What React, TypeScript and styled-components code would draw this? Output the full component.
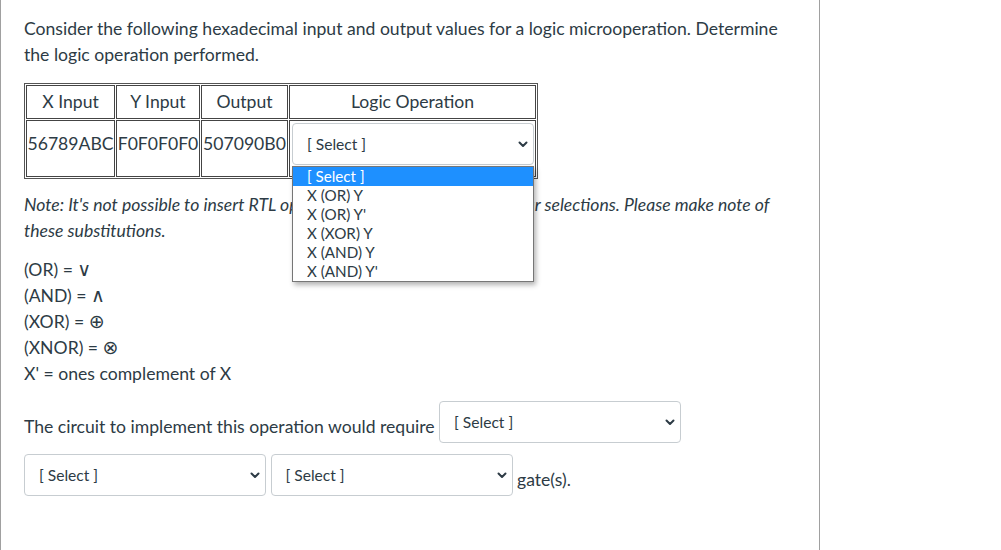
import React from "react";
import styled, { createGlobalStyle } from "styled-components";

const GlobalStyle = createGlobalStyle`
  html, body {
    margin: 0;
    padding: 0;
    background: #ffffff;
  }
  body {
    font-family: Lato, "Open Sans", "Liberation Sans", sans-serif;
    color: #2d3b45;
  }
`;

const operations = [
  "[ Select ]",
  "X (OR) Y",
  "X (OR) Y'",
  "X (XOR) Y",
  "X (AND) Y",
  "X (AND) Y'",
];

const Chevron = () => (
  <svg width="10" height="7" viewBox="0 0 10 7" aria-hidden="true">
    <path
      d="M1.5 1.5 L5 5 L8.5 1.5"
      fill="none"
      stroke="#2d3b45"
      strokeWidth="2"
      strokeLinecap="round"
      strokeLinejoin="round"
    />
  </svg>
);

interface SelectProps {
  open?: boolean;
  raised?: boolean;
}

const FakeSelect = ({ open, raised }: SelectProps) => (
  <SelectWrap raised={raised}>
    <SelectBox>
      <SelectText>[ Select ]</SelectText>
      <Chevron />
    </SelectBox>
    {open && (
      <ListBox>
        {operations.map((op, i) => (
          <ListItem key={op} active={i === 0}>
            {op}
          </ListItem>
        ))}
      </ListBox>
    )}
  </SelectWrap>
);

const App = () => {
  return (
    <>
      <GlobalStyle />
      <Panel>
        <Para>
          Consider the following hexadecimal input and output values for a
          logic microoperation. Determine the logic operation performed.
        </Para>

        <LogicTable>
          <thead>
            <tr>
              <HeadCell w={89}>X Input</HeadCell>
              <HeadCell w={84}>Y Input</HeadCell>
              <HeadCell w={87}>Output</HeadCell>
              <HeadCell w={246}>Logic Operation</HeadCell>
            </tr>
          </thead>
          <tbody>
            <tr>
              <DataCell>56789ABC</DataCell>
              <DataCell>F0F0F0F0</DataCell>
              <DataCell>507090B0</DataCell>
              <DataCell>
                <FakeSelect open />
              </DataCell>
            </tr>
          </tbody>
        </LogicTable>

        <Note>
          Note: It's not possible to insert RTL operators in the dropdowns for
          your selections. Please make note of these substitutions.
        </Note>

        <Para>
          (OR) = <Sym>∨</Sym>
          <br />
          (AND) = <Sym>∧</Sym>
          <br />
          (XOR) = <Sym>⊕</Sym>
          <br />
          (XNOR) = <Sym>⊗</Sym>
          <br />
          X' = ones complement of X
        </Para>

        <Question>
          The circuit to implement this operation would require{" "}
          <FakeSelect raised /> <FakeSelect raised /> <FakeSelect raised />{" "}
          gate(s).
        </Question>
      </Panel>
    </>
  );
};

export default App;

const Panel = styled.div`
  box-sizing: border-box;
  width: 820px;
  min-height: 550px;
  padding: 16px 25px 0 23px;
  border-left: 1px solid #a0a0a0;
  border-right: 1px solid #a0a0a0;
  font-size: 17.6px;
  line-height: 26px;
`;

const Para = styled.p`
  margin: 0 0 13px;
`;

const Note = styled.p`
  margin: 0 0 13px;
  font-style: italic;
`;

const Sym = styled.span`
  font-family: "DejaVu Sans", sans-serif;
  font-size: 19px;
  line-height: 0;
`;

const LogicTable = styled.table`
  margin: 15px 0 13px;
  border: 1px solid #555;
  border-spacing: 1px;
  line-height: 26px;
  font-size: 17.6px;
`;

const HeadCell = styled.th<{ w: number }>`
  box-sizing: border-box;
  width: ${(p) => p.w}px;
  border: 1px solid #444;
  padding: 3px 0;
  font-weight: normal;
  text-align: center;
  vertical-align: middle;
`;

const DataCell = styled.td`
  border: 1px solid #444;
  padding: 2px 0 11px;
  vertical-align: baseline;
  text-align: center;
  white-space: nowrap;
`;

const SelectWrap = styled.span<{ raised?: boolean }>`
  position: relative;
  display: inline-block;
  vertical-align: ${(p) => (p.raised ? "5px" : "baseline")};
  margin: ${(p) => (p.raised ? "0 0 11px" : "0 1px 0 2px")};
  text-align: left;
`;

const SelectBox = styled.span`
  box-sizing: border-box;
  display: inline-flex;
  align-items: center;
  justify-content: space-between;
  width: 242px;
  height: 42px;
  padding: 0 5px 0 14px;
  border: 1px solid #c7cdd1;
  border-radius: 4px;
  background: #fff;
`;

const SelectText = styled.span`
  font-size: 15.6px;
  line-height: 20px;
  color: #2d3b45;
`;

const ListBox = styled.div`
  position: absolute;
  left: 0;
  top: calc(100% + 1px);
  z-index: 5;
  box-sizing: border-box;
  width: 242px;
  background: #fff;
  border: 1px solid #767676;
  box-shadow: 2px 3px 5px rgba(0, 0, 0, 0.3);
`;

const ListItem = styled.div<{ active?: boolean }>`
  height: 19px;
  padding-left: 14px;
  font-size: 15.2px;
  line-height: 19px;
  color: ${(p) => (p.active ? "#fff" : "#2d3b45")};
  background: ${(p) => (p.active ? "#1e90ff" : "transparent")};
`;

const Question = styled.div`
  margin-top: 14px;
`;
